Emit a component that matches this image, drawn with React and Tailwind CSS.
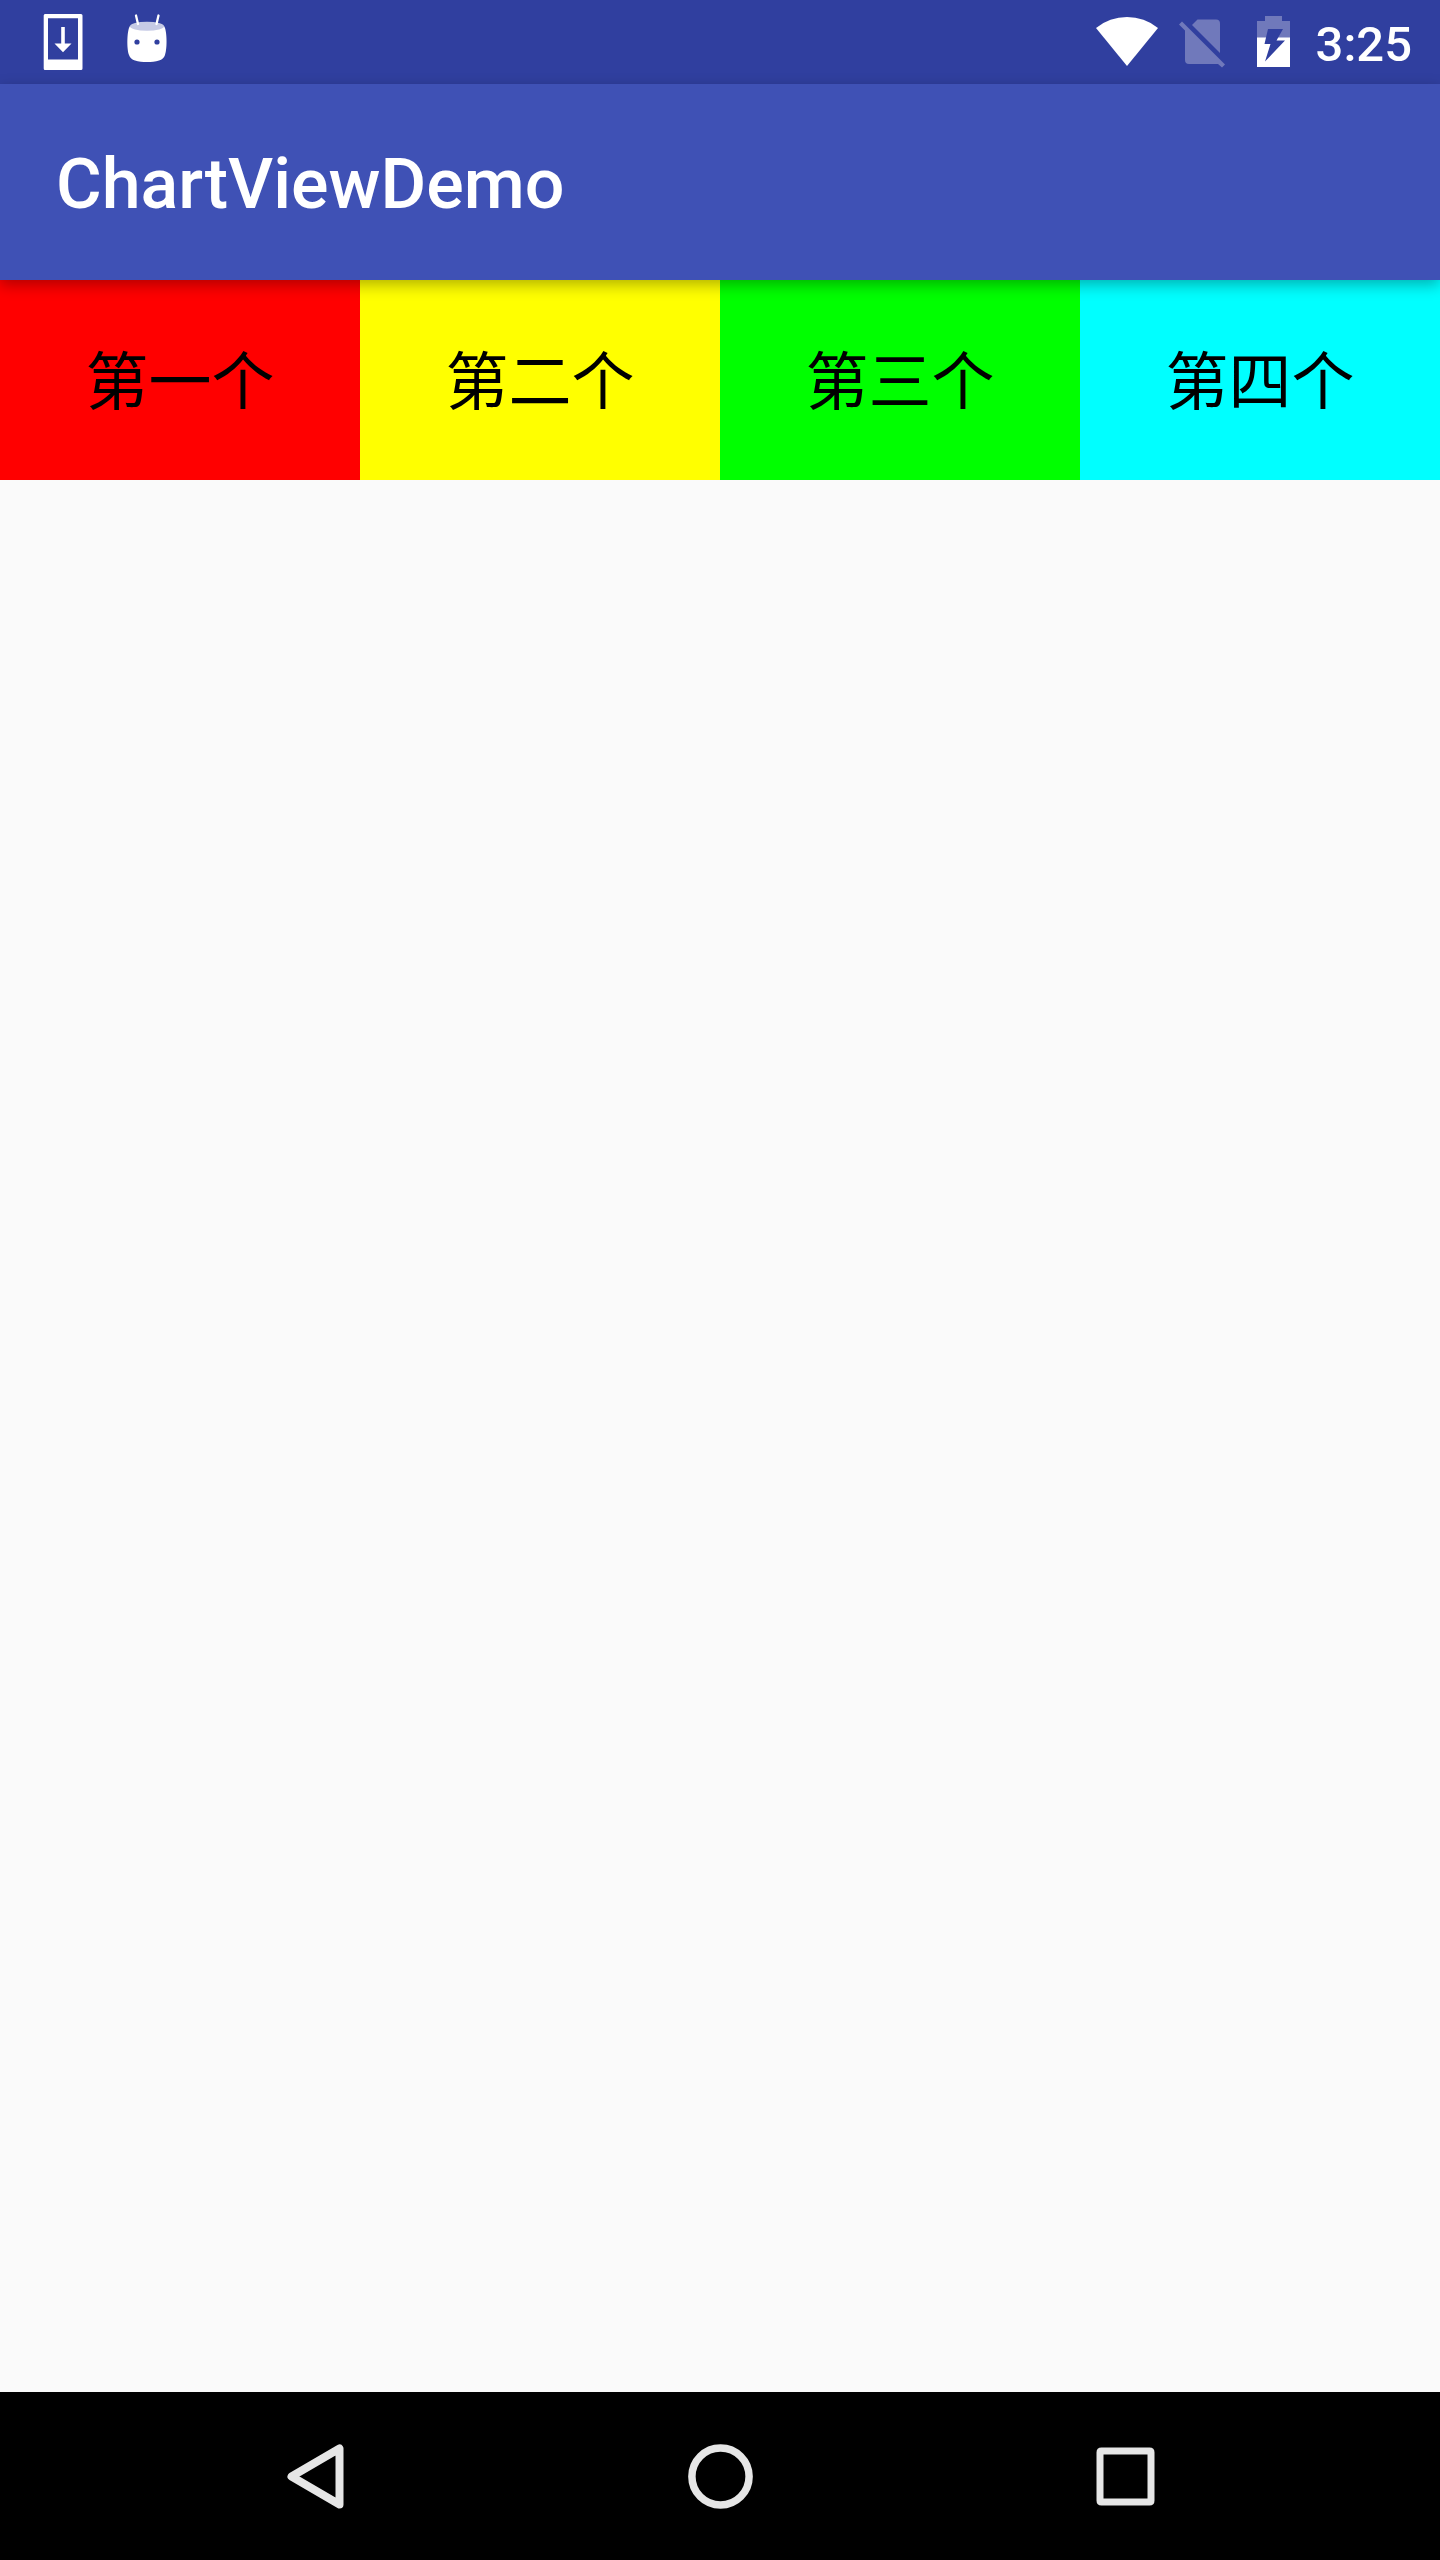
import React from "react";

const tabs = [
  { label: "第一个", color: "bg-[#ff0000]" },
  { label: "第二个", color: "bg-[#ffff00]" },
  { label: "第三个", color: "bg-[#00ff00]" },
  { label: "第四个", color: "bg-[#00ffff]" },
];

const DownloadIcon = () => (
  <svg className="w-[84px] h-[84px]" viewBox="0 0 84 84" fill="#fff">
    <path
      fillRule="evenodd"
      d="M24 14H60Q61.5 14 61.5 15.5V68.5Q61.5 70 60 70H24Q22.7 70 22.7 68.5V15.5Q22.7 14 24 14ZM27 18.3V59.5H57V18.3Z"
    />
    <path d="M40.200 27H43.800V43.500H50.500L42 52.300L33.500 43.500H40.200Z" />
  </svg>
);

const AndroidIcon = () => (
  <svg className="w-[84px] h-[84px]" viewBox="0 0 84 84">
    <path
      fill="#fff"
      d="M25 26C22 30 21.5 48 24 55C25 58 27 59.5 30 60.5C37 62.5 47 62.5 54 60.5C57 59.5 59 58 60 55C62.5 48 62 30 59 26Z"
    />
    <ellipse cx="42" cy="26.3" rx="17" ry="4.5" fill="#c6cae5" />
    <path
      d="M31 15.5L33 24M53.5 15.5L51.5 24"
      stroke="#fff"
      strokeWidth="2.3"
      strokeLinecap="round"
    />
    <circle cx="32" cy="42" r="2.6" fill="#303f9f" />
    <circle cx="52" cy="42" r="2.6" fill="#303f9f" />
  </svg>
);

const WifiIcon = () => (
  <svg className="w-[72px] h-[84px]" viewBox="0 0 72 84" fill="#fff">
    <path d="M33 66L2 28A49.2 49.2 0 0 1 64 28Z" />
  </svg>
);

const NoSimIcon = () => (
  <svg className="w-[72px] h-[84px]" viewBox="0 0 72 84" fill="#7079bb">
    <path d="M26 25L31.5 19.5H50Q54 19.5 54 23.5V53Z" />
    <path d="M13 24.5L16 21.5L59 64.5L56 67.5L52 64H23Q19 64 19 60V30.5Z" />
  </svg>
);

const BatteryIcon = () => (
  <svg className="w-[72px] h-[84px]" viewBox="0 0 72 84">
    <path fill="#7079bb" d="M27 16H44V21H52V38H19V21H27Z" />
    <path fill="#fff" d="M19 37.5H52V67H19Z" />
    <path
      fill="#303f9f"
      d="M30 29H45L38.5 40.5H47L27 61.5L32.5 44H26.5Z"
    />
  </svg>
);

const StatusBar = () => (
  <div className="h-[84px] bg-[#303f9f] flex items-center justify-between pl-[21px] pr-7">
    <div className="flex">
      <DownloadIcon />
      <AndroidIcon />
    </div>
    <div className="flex items-center">
      <WifiIcon />
      <NoSimIcon />
      <BatteryIcon />
      <time className="ml-1.5 pt-1 text-[49px] leading-none font-medium text-white">
        3:25
      </time>
    </div>
  </div>
);

const NavigationBar = () => {
  const buttonClass = "w-[280px] h-full flex items-center justify-center";
  return (
    <nav className="h-[168px] bg-black flex justify-between px-[175px]">
      <button className={buttonClass} aria-label="Back">
        <svg
          className="w-[84px] h-[84px]"
          viewBox="0 0 84 84"
          fill="none"
          stroke="#e6e6e6"
          strokeWidth="8"
          strokeLinejoin="round"
        >
          <path d="M66.5 14.5V70.5L18.5 42.5Z" />
        </svg>
      </button>
      <button className={buttonClass} aria-label="Home">
        <svg
          className="w-[84px] h-[84px]"
          viewBox="0 0 84 84"
          fill="none"
          stroke="#e6e6e6"
          strokeWidth="7.5"
        >
          <circle cx="42.5" cy="42.5" r="28.6" />
        </svg>
      </button>
      <button className={buttonClass} aria-label="Recent apps">
        <svg
          className="w-[84px] h-[84px]"
          viewBox="0 0 84 84"
          fill="#e6e6e6"
          fillRule="evenodd"
        >
          <path d="M18.5 13.5H66.5Q71.5 13.5 71.5 18.5V66.5Q71.5 71.5 66.5 71.5H18.5Q13.5 71.5 13.5 66.5V18.5Q13.5 13.5 18.5 13.5ZM20.5 20.5V64.5H64.5V20.5Z" />
        </svg>
      </button>
    </nav>
  );
};

const App = () => {
  return (
    <div className="min-h-screen flex flex-col bg-[#fafafa] font-[Roboto,'Noto_Sans_CJK_SC',sans-serif]">
      <StatusBar />
      <header className="relative z-10 h-[196px] bg-[#3f51b5] flex items-center px-14 pt-1 shadow-[0_5px_14px_rgba(0,0,0,0.3)]">
        <h1 className="text-[70px] leading-none font-medium text-white">
          ChartViewDemo
        </h1>
      </header>
      <main className="flex-1">
        <div className="grid grid-cols-4">
          {tabs.map((tab) => (
            <button
              key={tab.label}
              className={`${tab.color} h-[200px] pt-1 text-[63px] leading-none text-black`}
            >
              {tab.label}
            </button>
          ))}
        </div>
      </main>
      <NavigationBar />
    </div>
  );
};

export default App;
